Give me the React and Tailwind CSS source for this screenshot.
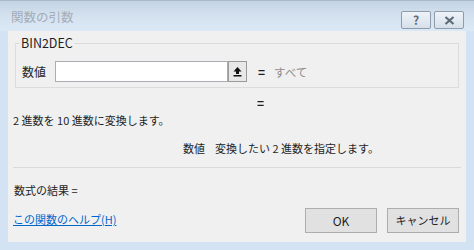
import React from "react";

const font = { fontFamily: '"Noto Sans CJK JP", "Noto Sans", sans-serif' };

export default function App() {
  return (
    <div
      className="w-[474px] h-[250px] flex flex-col bg-[#d3e3f4] text-[11px] text-[#1e1e1e] overflow-hidden"
      style={font}
    >
      {/* title bar */}
      <div className="h-[31px] flex items-start bg-gradient-to-b from-[#c4d3e2] via-[#d4e2f0] to-[#dbe8f5] border-t border-[#a9b9c9]">
        <div className="pl-[11px] pt-[8px] text-[12.5px] leading-[16px] text-[#a3acb6]">関数の引数</div>
        <div className="ml-auto mr-[10px] mt-[10px] flex gap-[3px]">
          <div className="w-[30px] h-[18px] border border-[#8e9cab] rounded-[2px] bg-gradient-to-b from-[#eef3f8] to-[#d6e0ea] flex items-center justify-center text-[12px] font-bold text-[#5d6b79] leading-none">
            ?
          </div>
          <div className="w-[30px] h-[18px] border border-[#8e9cab] rounded-[2px] bg-gradient-to-b from-[#eef3f8] to-[#d6e0ea] flex items-center justify-center">
            <svg width="11" height="9" viewBox="0 0 11 9">
              <path d="M1.5 1 L9.5 8 M9.5 1 L1.5 8" stroke="#5d6b79" strokeWidth="2.2" />
            </svg>
          </div>
        </div>
      </div>
      {/* client */}
      <div className="mx-[8px] h-[211px] bg-[#f0f0f0] flex flex-col">
        <div className="mt-[12px] mx-[7px] h-[45px] border border-[#dcdcdc] relative flex items-start">
          <div className="absolute left-[4px] -top-[9px] px-[1px] bg-[#f0f0f0] leading-[16px] text-[12.5px]">BIN2DEC</div>
          <div className="mt-[17px] ml-[6px] flex items-center">
            <span className="w-[33px] leading-[16px] text-[12px]">数値</span>
            <div className="w-[173px] h-[21px] bg-white border border-[#abadb3]" />
            <div className="w-[19px] h-[21px] border border-[#9a9a9a] bg-[#e8e8e8] flex items-center justify-center">
              <svg width="11" height="11" viewBox="0 0 11 11">
                <path d="M5.5 1 L1.5 5.5 H4 V8 H7 V5.5 H9.5 Z" fill="#111" />
                <rect x="1.5" y="9" width="8" height="1.5" fill="#111" />
              </svg>
            </div>
            <span className="ml-[11px] font-bold leading-[16px] text-[12px]">=</span>
            <span className="ml-[9px] text-[#8c8c8c] leading-[16px] text-[11.5px]">すべて</span>
          </div>
        </div>
        <div className="mt-[7px] pl-[249px] leading-[16px] font-bold text-[12px]">=</div>
        <div className="mt-[1px] pl-[5px] leading-[16px]">2 進数を 10 進数に変換します。</div>
        <div className="mt-[12px] pl-[175px] leading-[16px]">
          数値<span className="ml-[10px]">変換したい 2 進数を指定します。</span>
        </div>
        <div className="mt-[11px] mx-[5px] h-px bg-[#d9d9d9]" />
        <div className="mt-[14px] pl-[6px] leading-[16px]">数式の結果 =</div>
        <div className="mt-[10px] flex items-start pl-[5px] pr-[7px]">
          <span className="text-[#0066cc] underline leading-[16px] mt-[3px]">この関数のヘルプ(H)</span>
          <div className="ml-auto flex gap-[10px]">
            <div className="w-[72px] h-[25px] border border-[#adadad] bg-[#e1e1e1] flex items-center justify-center text-[12px]">OK</div>
            <div className="w-[72px] h-[25px] border border-[#adadad] bg-[#e1e1e1] flex items-center justify-center">キャンセル</div>
          </div>
        </div>
      </div>
    </div>
  );
}
